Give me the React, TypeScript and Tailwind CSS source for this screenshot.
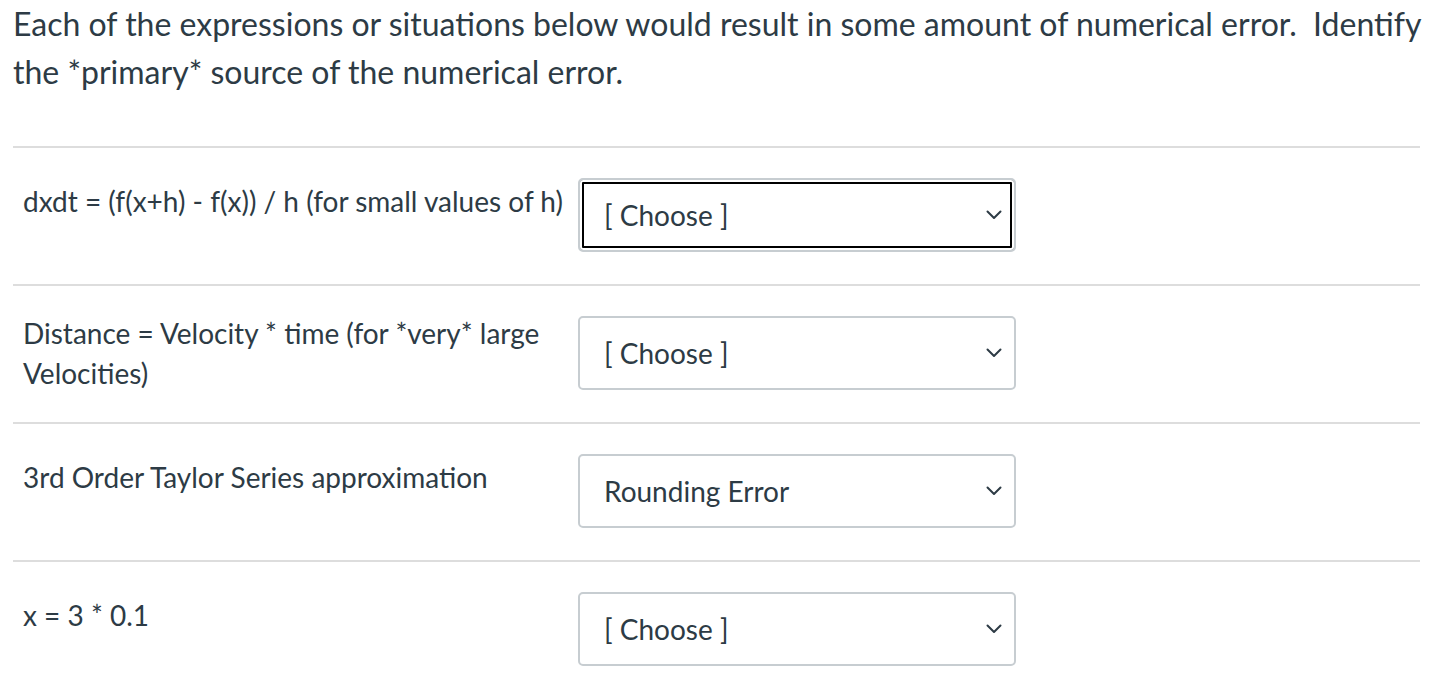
import React from "react";

const rows: { label: string; value: string; focused?: boolean; up?: boolean }[] = [
  { label: "dxdt = (f(x+h) - f(x)) / h (for small values of h)", value: "[ Choose ]", focused: true },
  { label: "Distance = Velocity * time (for *very* large Velocities)", value: "[ Choose ]", up: true },
  { label: "3rd Order Taylor Series approximation", value: "Rounding Error" },
  { label: "x = 3 * 0.1", value: "[ Choose ]" },
];

function Chevron() {
  return (
    <svg width="16" height="10" viewBox="0 0 16 10" className="shrink-0">
      <path d="M1.5 1.5 L8 8 L14.5 1.5" fill="none" stroke="#2d3b45" strokeWidth="2" strokeLinecap="round" strokeLinejoin="round" />
    </svg>
  );
}

export default function App() {
  return (
    <div
      className="bg-white text-[#2d3b45] pl-[13px] pr-[9px] w-[1429px] h-[678px] overflow-hidden"
      style={{ fontFamily: "Lato, 'Noto Sans', sans-serif" }}
    >
      <p className="text-[32px] leading-[48px] m-0 whitespace-nowrap">
        Each of the expressions or situations below would result in some amount of numerical error.&nbsp; Identify
        <br />
        the *primary* source of the numerical error.
      </p>
      <div className="mt-[50px]">
        {rows.map((r, i) => (
          <div key={i} className="border-t-2 border-[#dddddd] h-[138px] pt-[30px] pl-[10px] flex items-start">
            <div className={"w-[545px] text-[28px] leading-[40px] " + (r.up ? "-mt-[3px]" : "mt-[3px]")}>{r.label}</div>
            <div
              className={
                "ml-[10px] w-[438px] h-[74px] rounded-[5px] border-2 border-[#c7cdd1] flex items-center justify-between pl-[24px] pr-[12px] text-[28px] " +
                (r.focused ? "shadow-[inset_0_0_0_2px_white,inset_0_0_0_4px_#000]" : "")
              }
            >
              <span>{r.value}</span>
              <Chevron />
            </div>
          </div>
        ))}
      </div>
    </div>
  );
}
